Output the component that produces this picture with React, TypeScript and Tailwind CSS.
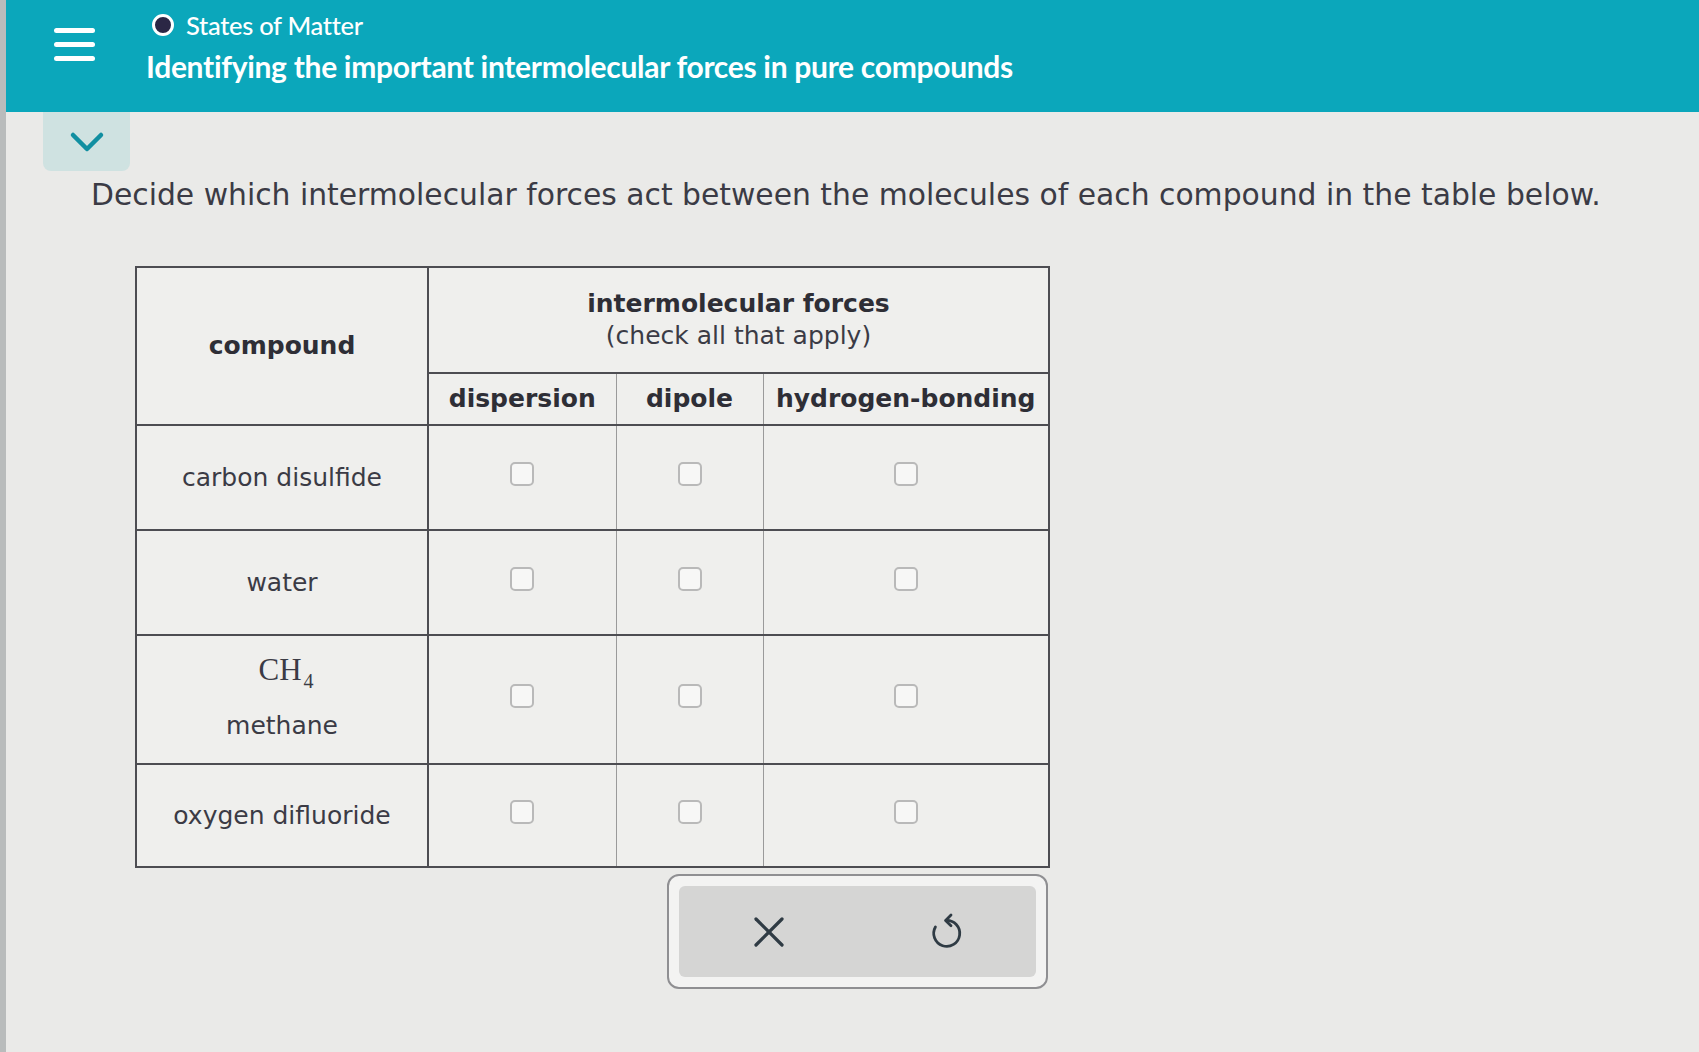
import { X } from "lucide-react";

const rows = [
  { name: "carbon disulfide", h: "h-[105px]" },
  { name: "water", h: "h-[105px]" },
  { name: "methane", formula: true, h: "h-[129px]" },
  { name: "oxygen difluoride", h: "h-[103px]" },
];

function Box() {
  return <span className="inline-block w-[24px] h-[24px] rounded-[5px] border-2 border-[#b9b9b9] bg-[#f7f7f6]" />;
}

export default function App() {
  return (
    <div className="min-h-[1052px] bg-[#eaeae8] border-l-[6px] border-[#b9bcbc] font-['DejaVu_Sans',sans-serif] text-[#3b3b45]">
      {/* Header */}
      <header className="h-[112px] bg-[#0ba7bb] flex items-start font-['Lato',sans-serif] text-white">
        <div className="w-[140px] pl-[48px] pt-[28px] flex flex-col gap-[9px]">
          <span className="block w-[41px] h-[5px] rounded-full bg-white" />
          <span className="block w-[41px] h-[5px] rounded-full bg-white" />
          <span className="block w-[41px] h-[5px] rounded-full bg-white" />
        </div>
        <div className="pt-[6px]">
          <div className="flex items-center gap-[12px] pl-[6px]">
            <span className="w-[22px] h-[22px] rounded-full border-[3px] border-white bg-[#2b2745]" />
            <span className="text-[25.5px] font-medium tracking-[-0.3px]">States of Matter</span>
          </div>
          <h1 className="mt-[0px] text-[30px] font-bold tracking-[-0.3px]">
            Identifying the important intermolecular forces in pure compounds
          </h1>
        </div>
      </header>

      {/* Collapse tab */}
      <div className="pl-[37px]">
        <div className="w-[87px] h-[59px] rounded-b-lg bg-[#cfe2e1] flex items-center justify-center">
          <svg width="36" height="22" viewBox="0 0 36 22" fill="none" stroke="#118fa1" strokeWidth="4.5" strokeLinecap="round" strokeLinejoin="round">
            <path d="M4 4l14 14L32 4" />
          </svg>
        </div>
      </div>

      <p className="ml-[85px] mt-[6px] text-[29.8px] leading-[36px]">
        Decide which intermolecular forces act between the molecules of each compound in the table below.
      </p>

      <div className="ml-[129px] mt-[53px] inline-flex flex-col items-end">
        <table className="border-collapse border-2 border-[#4d4d52] bg-[#efefed] text-[25px]">
          <colgroup>
            <col className="w-[292px]" />
            <col className="w-[188px]" />
            <col className="w-[147px]" />
            <col className="w-[286px]" />
          </colgroup>
          <thead>
            <tr className="h-[106px]">
              <th rowSpan={2} className="border-2 border-[#4d4d52] font-bold text-[#2e2e36]">compound</th>
              <th colSpan={3} className="border-2 border-[#4d4d52] leading-[32px]">
                <div className="font-bold text-[#2e2e36]">intermolecular forces</div>
                <div className="font-normal">(check all that apply)</div>
              </th>
            </tr>
            <tr className="h-[52px] font-bold text-[#2e2e36]">
              <th className="border-2 border-[#4d4d52] border-r border-r-[#9a9a9a]">dispersion</th>
              <th className="border border-[#9a9a9a] border-y-2 border-y-[#4d4d52]">dipole</th>
              <th className="border-2 border-[#4d4d52] border-l border-l-[#9a9a9a] whitespace-nowrap">hydrogen-bonding</th>
            </tr>
          </thead>
          <tbody>
            {rows.map((r) => (
              <tr key={r.name} className={r.h}>
                <td className="border-2 border-[#4d4d52] text-center">
                  {r.formula ? (
                    <div className="flex flex-col items-center gap-[22px]">
                      <span className="font-['Liberation_Serif',serif] text-[31px] leading-none pl-[6px]">
                        CH<sub className="text-[20px] relative top-[8px] left-[2px]">4</sub>
                      </span>
                      <span>{r.name}</span>
                    </div>
                  ) : (
                    r.name
                  )}
                </td>
                <td className="border-2 border-[#4d4d52] border-r border-r-[#9a9a9a] text-center"><Box /></td>
                <td className="border border-[#9a9a9a] border-y-2 border-y-[#4d4d52] text-center"><Box /></td>
                <td className="border-2 border-[#4d4d52] border-l border-l-[#9a9a9a] text-center"><Box /></td>
              </tr>
            ))}
          </tbody>
        </table>

        {/* Actions */}
        <div className="mt-[6px] mr-[2px] w-[381px] rounded-xl border-2 border-[#8f8f92] bg-[#f3f3f2] p-[10px]">
          <div className="h-[91px] rounded-md bg-[#d5d5d4] flex items-center justify-around">
            <X size={52} strokeWidth={1.5} color="#2f3b44" />
            <svg width="48" height="48" viewBox="0 0 24 24" fill="none" stroke="#2f3b44" strokeWidth="1.4" strokeLinecap="round" strokeLinejoin="round">
              <path d="M11 6.2a6.5 6.5 0 1 1-5.3 3.3" />
              <path d="M13.5 3.5 10.8 6.2 13.5 8.9" />
            </svg>
          </div>
        </div>
      </div>
    </div>
  );
}
